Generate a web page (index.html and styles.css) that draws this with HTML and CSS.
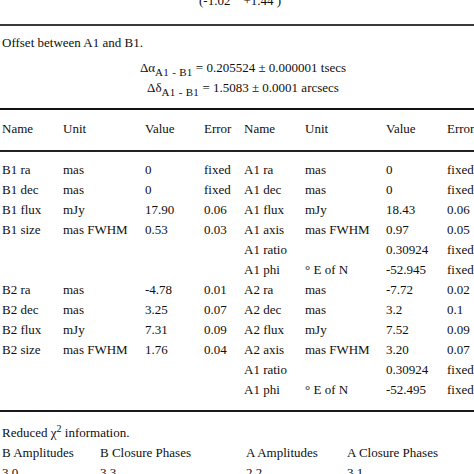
FILE: index.html
```html
<!DOCTYPE html>
<html>
<head>
<meta charset="utf-8">
<link rel="stylesheet" href="styles.css">
</head>
<body>
<div class="page">
  <div class="cut-top"><div class="cut-text">(-1.02 &nbsp;&nbsp;&nbsp;+1.44 )</div></div>
  <div class="rule rule-top"></div>
  <p class="offset">Offset between A1 and B1.</p>
  <div class="eqs">
    <div class="eq eq-a">&Delta;&alpha;<sub>A1 - B1</sub> = 0.205524 &plusmn; 0.000001 tsecs</div>
    <div class="eq eq-d">&Delta;&delta;<sub>A1 - B1</sub> = 1.5083 &plusmn; 0.0001 arcsecs</div>
  </div>
  <div class="rule rule-table"></div>
  <div class="grid head">
    <div>Name</div><div>Unit</div><div>Value</div><div>Error</div>
    <div>Name</div><div>Unit</div><div>Value</div><div>Error</div>
  </div>
  <div class="rule rule-head"></div>
  <div class="grid body">
    <div>B1 ra</div><div>mas</div><div>0</div><div>fixed</div>
    <div>A1 ra</div><div>mas</div><div>0</div><div>fixed</div>

    <div>B1 dec</div><div>mas</div><div>0</div><div>fixed</div>
    <div>A1 dec</div><div>mas</div><div>0</div><div>fixed</div>

    <div>B1 flux</div><div>mJy</div><div>17.90</div><div>0.06</div>
    <div>A1 flux</div><div>mJy</div><div>18.43</div><div>0.06</div>

    <div>B1 size</div><div>mas FWHM</div><div>0.53</div><div>0.03</div>
    <div>A1 axis</div><div>mas FWHM</div><div>0.97</div><div>0.05</div>

    <div></div><div></div><div></div><div></div>
    <div>A1 ratio</div><div></div><div>0.30924</div><div>fixed</div>

    <div></div><div></div><div></div><div></div>
    <div>A1 phi</div><div>&deg; E of N</div><div>-52.945</div><div>fixed</div>

    <div>B2 ra</div><div>mas</div><div>-4.78</div><div>0.01</div>
    <div>A2 ra</div><div>mas</div><div>-7.72</div><div>0.02</div>

    <div>B2 dec</div><div>mas</div><div>3.25</div><div>0.07</div>
    <div>A2 dec</div><div>mas</div><div>3.2</div><div>0.1</div>

    <div>B2 flux</div><div>mJy</div><div>7.31</div><div>0.09</div>
    <div>A2 flux</div><div>mJy</div><div>7.52</div><div>0.09</div>

    <div>B2 size</div><div>mas FWHM</div><div>1.76</div><div>0.04</div>
    <div>A2 axis</div><div>mas FWHM</div><div>3.20</div><div>0.07</div>

    <div></div><div></div><div></div><div></div>
    <div>A1 ratio</div><div></div><div>0.30924</div><div>fixed</div>

    <div></div><div></div><div></div><div></div>
    <div>A1 phi</div><div>&deg; E of N</div><div>-52.495</div><div>fixed</div>
  </div>
  <div class="rule rule-bottom"></div>
  <p class="reduced">Reduced &chi;<sup>2</sup> information.</p>
  <div class="chi">
    <div>B Amplitudes</div><div>B Closure Phases</div><div>A Amplitudes</div><div>A Closure Phases</div>
    <div>3.0</div><div>3.3</div><div>2.2</div><div>3.1</div>
  </div>
</div>
</body>
</html>
```

FILE: styles.css
```css
html, body {
  margin: 0;
  padding: 0;
  overflow: hidden;
  background: #ffffff;
}

.page {
  width: 474px;
  height: 474px;
  overflow: hidden;
  font-family: "Liberation Serif", "Times New Roman", serif;
  font-size: 13px;
  color: #0f0f0f;
}

.cut-top {
  height: 24px;
  overflow: hidden;
}

.cut-text {
  margin-top: -7px;
  line-height: 16px;
  padding-left: 199px;
  white-space: pre;
}

.rule {
  width: 474px;
  background: #1c1c1c;
}

.rule-top {
  height: 2px;
  background: #3a3a3a;
}

.offset {
  margin: 9px 0 0 0;
  padding-left: 2px;
  line-height: 16px;
}

.eqs {
  margin-top: 7px;
  padding-left: 12px;
  text-align: center;
}

.eq {
  line-height: 20px;
  height: 20px;
}

.eq sub {
  font-size: 11px;
  line-height: 0;
  vertical-align: -4px;
  letter-spacing: 0.3px;
}

.rule-table {
  margin-top: 10px;
  height: 2px;
  background: #111;
}

.grid {
  display: grid;
  grid-template-columns: 61px 82px 59px 40px 61px 81px 61px 60px;
  padding-left: 2px;
  white-space: nowrap;
}

.head {
  height: 40px;
  grid-auto-rows: 40px;
  line-height: 38px;
}

.rule-head {
  height: 2px;
  background: #222;
}

.body {
  padding-top: 8px;
  grid-auto-rows: 20px;
  line-height: 20px;
}

.rule-bottom {
  margin-top: 10px;
  height: 2px;
  background: #1a1a1a;
}

.reduced {
  margin: 11px 0 0 0;
  padding-left: 2px;
  line-height: 20px;
}

.reduced sup {
  font-size: 10px;
  line-height: 0;
  vertical-align: 5px;
}

.chi {
  display: grid;
  grid-template-columns: 98px 146px 101px 127px;
  grid-auto-rows: 20px;
  line-height: 20px;
  padding-left: 2px;
  white-space: nowrap;
}
```
